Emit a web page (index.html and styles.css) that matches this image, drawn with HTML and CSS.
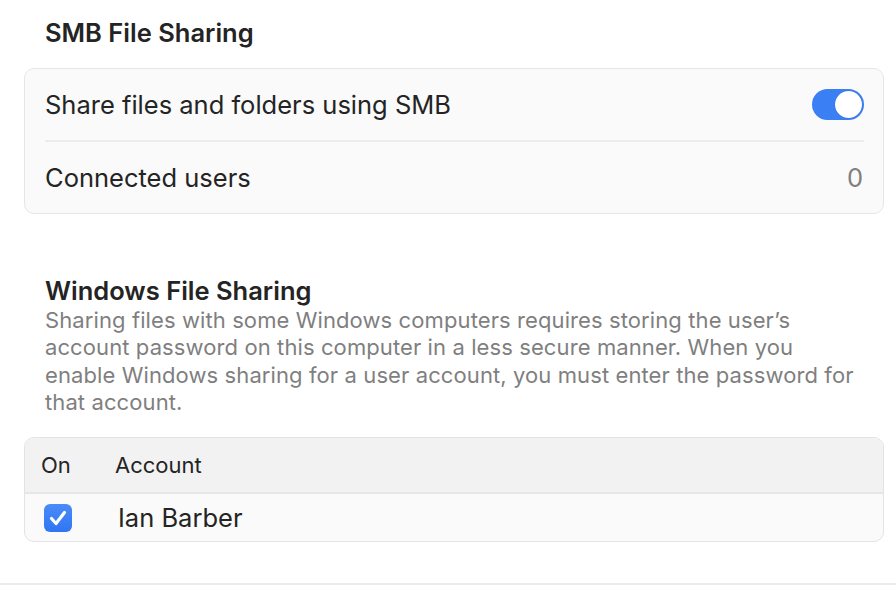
FILE: index.html
```html
<!DOCTYPE html>
<html>
<head>
<meta charset="utf-8">
<link rel="stylesheet" href="styles.css">
</head>
<body>
<div class="page">
  <h2 class="section-title smb-title">SMB File Sharing</h2>
  <div class="card">
    <div class="row">
      <span class="label">Share files and folders using SMB</span>
      <span class="toggle"><span class="knob"></span></span>
    </div>
    <div class="divider"></div>
    <div class="row">
      <span class="label">Connected users</span>
      <span class="value">0</span>
    </div>
  </div>

  <h2 class="section-title win-title">Windows File Sharing</h2>
  <p class="desc">Sharing files with some Windows computers requires storing the user’s account password on this computer in a less secure manner. When you enable Windows sharing for a user account, you must enter the password for that account.</p>

  <div class="table">
    <div class="thead">
      <span class="col-on">On</span>
      <span class="col-account">Account</span>
    </div>
    <div class="trow">
      <span class="col-on">
        <span class="checkbox">
          <svg viewBox="0 0 28 28" width="28" height="28"><path d="M7.5 14.5 L12 19.5 L20.5 8.5" fill="none" stroke="#fff" stroke-width="3.2" stroke-linecap="round" stroke-linejoin="round"/></svg>
        </span>
      </span>
      <span class="col-account name">Ian Barber</span>
    </div>
  </div>
</div>
<div class="bottom-line"></div>
</body>
</html>
```

FILE: styles.css
```css
html, body {
  margin: 0;
  padding: 0;
  background: #ffffff;
}
body {
  width: 896px;
  height: 608px;
  overflow: hidden;
  font-family: Inter, "Noto Sans", "Liberation Sans", sans-serif;
  color: #242424;
}
.page {
  padding: 0 12px 0 24px;
}
.section-title {
  margin: 0;
  font-size: 25.5px;
  font-weight: 600;
  color: #242424;
  padding-left: 21px;
}
.smb-title {
  padding-top: 17px;
  line-height: 32px;
  height: 32px;
  margin-bottom: 19px;
}
.card {
  background: #fafafa;
  border: 1px solid #e6e6e6;
  border-radius: 10px;
  padding: 0 19px 0 20px;
}
.row {
  display: flex;
  align-items: center;
  justify-content: space-between;
  height: 71px;
  font-size: 25.5px;
}
.label {
  color: #242424;
}
.value {
  color: #7f7f7f;
  padding-right: 1px;
}
.divider {
  height: 2px;
  background: #ececec;
}
.toggle {
  width: 52px;
  height: 31px;
  border-radius: 16px;
  background: #3a7ff3;
  display: flex;
  align-items: center;
  justify-content: flex-end;
  padding: 0 2px;
  box-sizing: border-box;
}
.knob {
  width: 27px;
  height: 27px;
  border-radius: 50%;
  background: #ffffff;
  box-shadow: 0 0 1px rgba(0,0,0,0.3);
}
.win-title {
  margin-top: 61px;
  line-height: 32px;
}
.desc {
  margin: 0;
  padding-left: 21px;
  padding-right: 20px;
  font-size: 22px;
  letter-spacing: 0.1px;
  line-height: 27.3px;
  color: #7f7f7f;
}
.table {
  margin-top: 21px;
  border: 1px solid #e3e3e3;
  border-radius: 10px;
  overflow: hidden;
  background: #fafafa;
}
.thead {
  display: flex;
  align-items: center;
  height: 54px;
  background: #f2f2f2;
  border-bottom: 2px solid #e6e6e6;
  font-size: 22px;
  color: #242424;
}
.trow {
  display: flex;
  align-items: center;
  height: 47px;
}
.col-on {
  width: 90px;
  padding-left: 16px;
  box-sizing: border-box;
  flex: none;
  display: flex;
  align-items: center;
}
.trow .col-on {
  padding-left: 19px;
  width: 93px;
}
.name {
  font-size: 25.5px;
}
.checkbox {
  width: 28px;
  height: 28px;
  border-radius: 6px;
  background: linear-gradient(#4a8bf7, #2f76f2);
  display: block;
}
.checkbox svg {
  display: block;
}
.bottom-line {
  position: absolute;
  left: 0;
  top: 583px;
  width: 896px;
  height: 2px;
  background: #ececec;
}
```
